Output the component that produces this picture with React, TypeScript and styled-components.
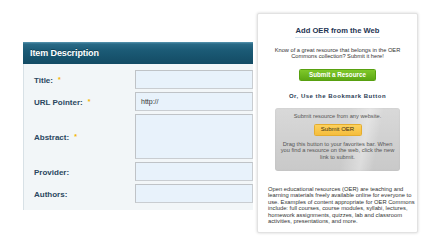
import React from "react";
import styled, { createGlobalStyle } from "styled-components";

const Global = createGlobalStyle`
  html, body { margin: 0; padding: 0; background: #fff; }
  body { font-family: "Liberation Sans", Arial, sans-serif; }
`;

const Page = styled.div`
  width: 442px;
  height: 249px;
  display: flex;
  align-items: flex-start;
  overflow: hidden;
`;

const FormPanel = styled.section`
  margin: 42px 0 0 23px;
  width: 230px;
  flex: none;
`;

const PanelHeader = styled.div`
  height: 22px;
  display: flex;
  align-items: center;
  padding-left: 7px;
  background: linear-gradient(#5a98b2 0px, #2a6b87 2px, #1b5a75 40%, #134b64 100%);
  color: #fff;
  font-weight: bold;
  font-size: 9px;
  letter-spacing: -0.1px;
  text-shadow: 0 -1px 0 rgba(0,0,0,0.3);
`;

const PanelBody = styled.div`
  background: #f2f6f8;
  border-left: 1px solid #d8e1e6;
  padding: 6px 0 7px 0;
  display: flex;
  flex-direction: column;
  gap: 3px;
`;

const Row = styled.div`
  display: flex;
  align-items: center;
`;

const Label = styled.label`
  width: 111px;
  flex: none;
  box-sizing: border-box;
  padding: 1px 0 0 10px;
  font-size: 8px;
  font-weight: bold;
  color: #2a4760;
  display: flex;
  gap: 5px;
`;

const Star = styled.span`
  color: #f5b400;
  font-size: 7px;
`;

const Input = styled.div<{ $h: number }>`
  flex: 1;
  height: ${(p) => p.$h}px;
  box-sizing: border-box;
  background: #e8f2fb;
  border: 1px solid #c9cdd1;
  border-top-color: #bfc3c7;
  border-left-color: #bfc3c7;
  font-size: 7px;
  color: #333;
  padding: 5px 0 0 5px;
`;

const Card = styled.aside`
  margin: 13px 0 0 4px;
  width: 161px;
  height: 220px;
  box-sizing: border-box;
  flex: none;
  background: #fff;
  border: 1px solid #e2e2e2;
  border-radius: 2px;
  box-shadow: 0 0 3px rgba(0,0,0,0.18);
  display: flex;
  flex-direction: column;
  align-items: center;
  padding-top: 12px;
`;

const CardTitle = styled.h2`
  margin: 0;
  font-size: 7.6px;
  font-weight: bold;
  color: #1f3554;
  padding: 0 1px 2px;
  border-bottom: 1px solid #d6e4ee;
`;

const Intro = styled.p`
  margin: 9px 0 0;
  font-size: 5.7px;
  line-height: 6.4px;
  color: #333;
  text-align: center;
`;

const GreenButton = styled.div`
  margin-top: 9px;
  width: 77px;
  height: 12px;
  box-sizing: border-box;
  border-radius: 1.5px;
  background: linear-gradient(#7fc82a, #5da814);
  border: 1px solid #58a010;
  color: #fff;
  font-weight: bold;
  font-size: 6.3px;
  display: flex;
  align-items: center;
  justify-content: center;
`;

const OrLine = styled.div`
  margin-top: 12px;
  font-size: 6px;
  font-weight: bold;
  letter-spacing: 0.5px;
  color: #2b3c55;
`;

const Bookmark = styled.div`
  margin-top: 9px;
  width: 125px;
  height: 63px;
  box-sizing: border-box;
  border-radius: 3px;
  background:
    linear-gradient(100deg, rgba(255,255,255,0) 55%, rgba(255,255,255,0.35) 70%, rgba(255,255,255,0) 80%),
    linear-gradient(#d9d9d9, #cfcfcf 60%, #c9c9c9);
  box-shadow: inset 0 0 2px rgba(0,0,0,0.08);
  display: flex;
  flex-direction: column;
  align-items: center;
  padding-top: 5px;
  color: #555;
  font-size: 5.7px;
  line-height: 6.8px;
  text-align: center;
`;

const YellowButton = styled.div`
  margin-top: 4px;
  width: 48px;
  height: 12px;
  box-sizing: border-box;
  border-radius: 1.5px;
  background: linear-gradient(#fcd15e, #f5bd3c);
  border: 1px solid #e5ad2e;
  color: #3b2f14;
  font-size: 6px;
  display: flex;
  align-items: center;
  justify-content: center;
`;

const DragText = styled.p`
  margin: 5px 0 0;
`;

const About = styled.p`
  margin: 15px 0 0;
  align-self: stretch;
  padding-left: 10px;
  font-size: 5.8px;
  line-height: 6.5px;
  color: #333;
`;

const rows: { label: string; star?: boolean; h: number; value?: string }[] = [
  { label: "Title:", star: true, h: 19 },
  { label: "URL Pointer:", star: true, h: 19, value: "http://" },
  { label: "Abstract:", star: true, h: 45 },
  { label: "Provider:", h: 19 },
  { label: "Authors:", h: 19 },
];

export default function App() {
  return (
    <>
      <Global />
      <Page>
        <FormPanel>
          <PanelHeader>Item Description</PanelHeader>
          <PanelBody>
            {rows.map((r) => (
              <Row key={r.label}>
                <Label>
                  {r.label}
                  {r.star && <Star>*</Star>}
                </Label>
                <Input $h={r.h}>{r.value}</Input>
              </Row>
            ))}
          </PanelBody>
        </FormPanel>
        <Card>
          <CardTitle>Add OER from the Web</CardTitle>
          <Intro>
            Know of a great resource that belongs in the OER
            <br />
            Commons collection? Submit it here!
          </Intro>
          <GreenButton>Submit a Resource</GreenButton>
          <OrLine>Or, Use the Bookmark Button</OrLine>
          <Bookmark>
            Submit resource from any website.
            <YellowButton>Submit OER</YellowButton>
            <DragText>
              Drag this button to your favorites bar. When
              <br />
              you find a resource on the web, click the new
              <br />
              link to submit.
            </DragText>
          </Bookmark>
          <About>
            Open educational resources (OER) are teaching and
            <br />
            learning materials freely available online for everyone to
            <br />
            use. Examples of content appropriate for OER Commons
            <br />
            include: full courses, course modules, syllabi, lectures,
            <br />
            homework assignments, quizzes, lab and classroom
            <br />
            activities, presentations, and more.
          </About>
        </Card>
      </Page>
    </>
  );
}
